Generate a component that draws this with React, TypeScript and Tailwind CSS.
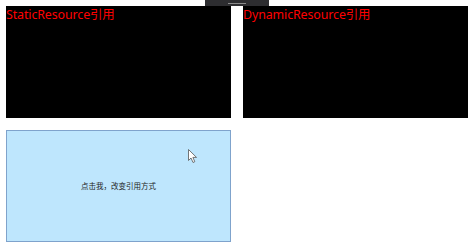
import React, { useState } from "react";

const FONT = {
  fontFamily: '"Noto Sans", "Noto Sans CJK SC", sans-serif',
};

export default function App() {
  const [dynamic, setDynamic] = useState(false);

  return (
    <div
      className="relative h-[248px] w-[474px] overflow-hidden bg-white p-[6px]"
      style={FONT}
    >
      {/* debug toolbar stub at top */}
      <div className="absolute left-[205px] top-0 flex h-[6px] w-[64px] items-center justify-center bg-[#2d2d30]">
        <div className="h-[1px] w-[18px] bg-[#8a8a8a]" />
      </div>

      <div className="grid h-full grid-cols-2 grid-rows-2 gap-[12px]">
        <div className="bg-black">
          <span className="block text-[12.4px] leading-[17px] tracking-[-0.1px] text-[#ff0000]">
            StaticResource引用
          </span>
        </div>
        <div className="bg-black">
          <span className="block text-[12.4px] leading-[17px] tracking-[-0.1px] text-[#ff0000]">
            DynamicResource引用
          </span>
        </div>
        <button
          onClick={() => setDynamic(!dynamic)}
          className="relative flex items-center justify-center border border-[#7fa3cc] bg-[#bee6fd] pt-[2px] text-[7.5px] text-[#222]"
        >
          点击我，改变引用方式
          <svg
            className="absolute left-[181px] top-[18px]"
            width="10"
            height="15"
            viewBox="0 0 10 15"
          >
            <path
              d="M0.5 0.5 L0.5 11.5 L3 9 L5 13.5 L6.8 12.7 L4.9 8.4 L8.5 8.4 Z"
              fill="#ffffff"
              stroke="#555"
              strokeWidth="0.8"
            />
          </svg>
        </button>
        <div />
      </div>
    </div>
  );
}
